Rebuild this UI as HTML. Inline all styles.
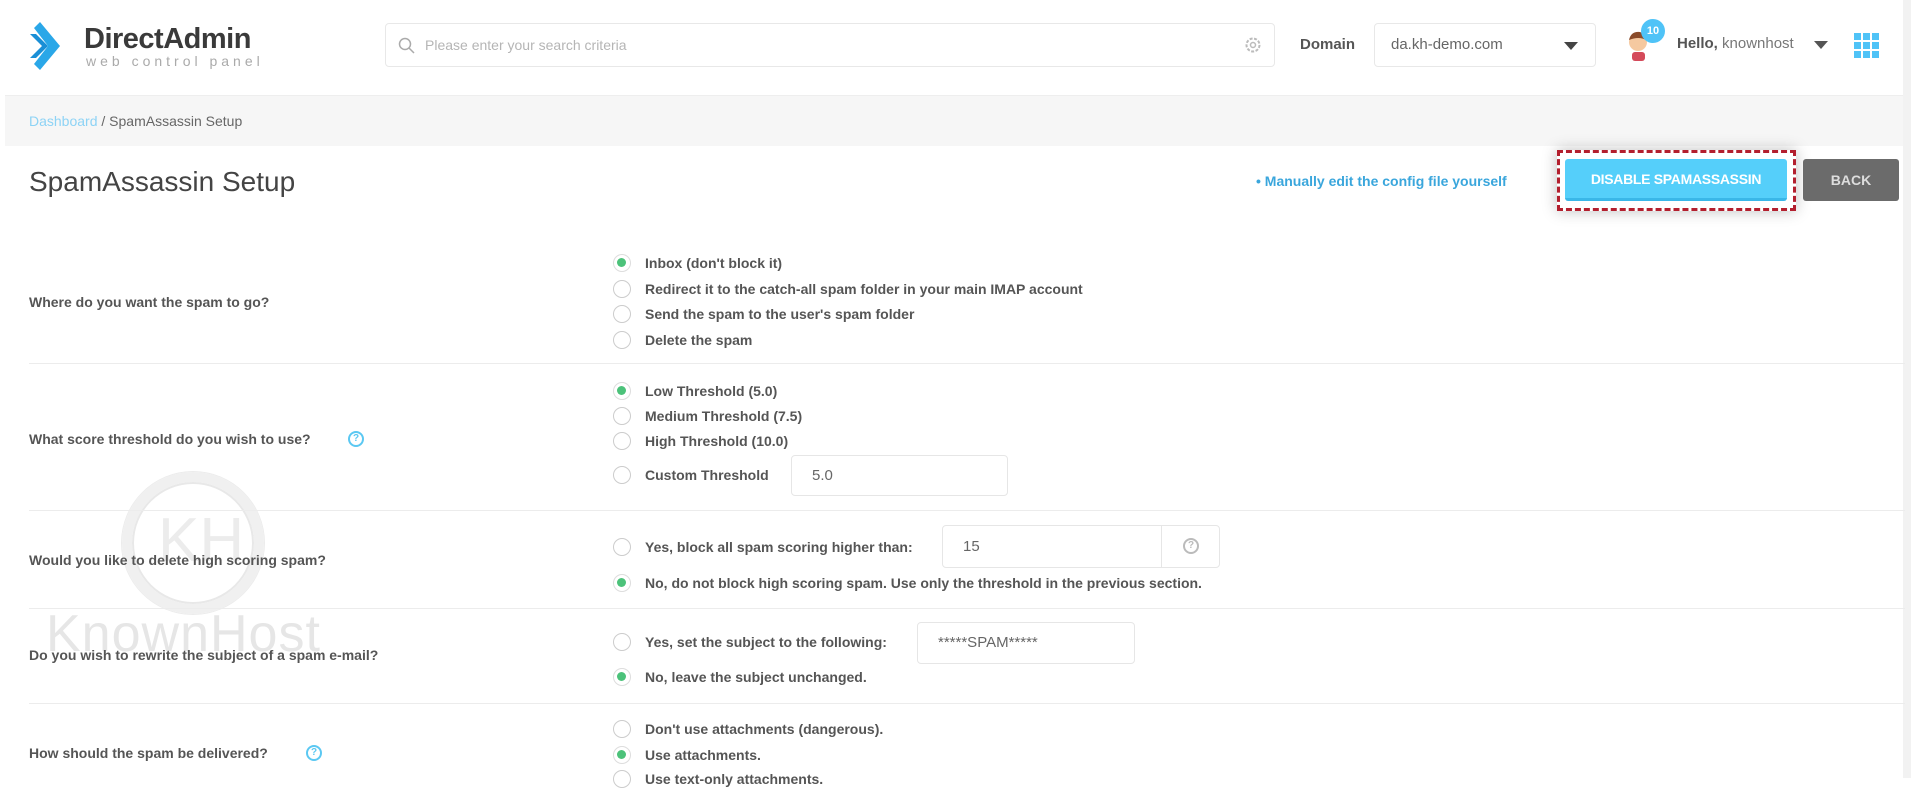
<!DOCTYPE html>
<html><head><meta charset="utf-8"><style>
*{margin:0;padding:0;box-sizing:border-box}
body{width:1911px;height:778px;overflow:hidden;background:#fff;font-family:"Liberation Sans",sans-serif;position:relative;color:#444}
.a{position:absolute;white-space:nowrap}
.t{font-size:14px;font-weight:bold;color:#555;line-height:18px}
.r{position:absolute;width:18px;height:18px;border:1.5px solid #ccc;border-radius:50%;background:#fff}
.r.on{border-color:#ddd}
.r.on::after{content:"";position:absolute;left:3px;top:3px;width:9px;height:9px;border-radius:50%;background:#4cc27a}
.in{position:absolute;border:1px solid #e6e6e6;border-radius:4px;background:#fff;font-size:15px;color:#666;padding-left:20px}
.sep{position:absolute;left:29px;width:1876px;height:1px;background:#ececec}
.q{position:absolute;width:16px;height:16px;border:2px solid #5bc8f2;border-radius:50%;font-size:10px;color:#5bc8f2;text-align:center;line-height:12px;font-weight:bold}
</style></head><body>
<div class="a" style="left:1903px;top:0;width:8px;height:778px;background:#f2f2f2"></div>
<!-- watermark -->
<div class="a" style="left:122px;top:472px;width:142px;height:142px;border-radius:50%;border:10px solid #f0f0f0;box-shadow:inset 0 0 0 2px #e8e8e8,0 0 0 1px #ececec"></div>
<div class="a" style="left:158px;top:505px;font-size:62px;color:#ececec">KH</div>
<div class="a" style="left:46px;top:604px;font-size:52px;color:#e6e6e6;letter-spacing:1px">KnownHost</div>
<!-- header -->
<svg class="a" style="left:28px;top:20px" width="34" height="52" viewBox="0 0 34 52"><path d="M2 14 L14 26 L2 38 L8 38 L20 26 L8 14Z" fill="#1a8fd6"/><path d="M12 2 L32 26 L12 50 L6 44 L20 26 L6 8Z" fill="#2aa7e8"/></svg>
<div class="a" style="left:84px;top:23px;font-size:29px;font-weight:bold;color:#3a3a3a;letter-spacing:-0.5px">DirectAdmin</div>
<div class="a" style="left:86px;top:53px;font-size:14px;color:#aaa;letter-spacing:4px">web control panel</div>
<div class="a" style="left:385px;top:23px;width:890px;height:44px;border:1px solid #e8e8e8;border-radius:4px"></div>
<svg class="a" style="left:398px;top:37px" width="18" height="18"><circle cx="7" cy="7" r="5.5" fill="none" stroke="#aaa" stroke-width="1.5"/><path d="M11 11 L16 16" stroke="#aaa" stroke-width="1.5"/></svg>
<div class="a" style="left:425px;top:37px;font-size:14px;color:#b5b5b5">Please enter your search criteria</div>
<svg class="a" style="left:1244px;top:36px" width="18" height="18"><circle cx="9" cy="9" r="6.5" fill="none" stroke="#bbb" stroke-width="2" stroke-dasharray="3 1.5"/><circle cx="9" cy="9" r="2.5" fill="none" stroke="#bbb" stroke-width="1.5"/></svg>
<div class="a" style="left:1300px;top:36px;font-size:15px;font-weight:bold;color:#555">Domain</div>
<div class="a" style="left:1374px;top:23px;width:222px;height:44px;border:1px solid #e8e8e8;border-radius:4px"></div>
<div class="a" style="left:1391px;top:36px;font-size:15px;color:#666">da.kh-demo.com</div>
<div class="a" style="left:1564px;top:42px;border-left:7px solid transparent;border-right:7px solid transparent;border-top:8px solid #444"></div>
<svg class="a" style="left:1624px;top:28px" width="30" height="34"><circle cx="14" cy="14" r="9" fill="#f5c9a0"/><path d="M5 12 Q7 3 16 4 Q22 6 22 12 Q15 8 5 12Z" fill="#8a4b2a"/><rect x="8" y="24" width="13" height="9" rx="3" fill="#d44a5a"/></svg>
<div class="a" style="left:1641px;top:19px;width:24px;height:24px;border-radius:50%;background:#4fc3f7;color:#fff;font-size:11px;font-weight:bold;text-align:center;line-height:24px">10</div>
<div class="a" style="left:1677px;top:35px;font-size:15px;color:#777"><b style="color:#555">Hello,</b> knownhost</div>
<div class="a" style="left:1814px;top:41px;border-left:7px solid transparent;border-right:7px solid transparent;border-top:8px solid #555"></div>
<svg class="a" style="left:1854px;top:33px" width="26" height="26"><g fill="#4fc3f7"><rect x="0" y="0" width="7" height="7"/><rect x="9" y="0" width="7" height="7"/><rect x="18" y="0" width="7" height="7"/><rect x="0" y="9" width="7" height="7"/><rect x="9" y="9" width="7" height="7"/><rect x="18" y="9" width="7" height="7"/><rect x="0" y="18" width="7" height="7"/><rect x="9" y="18" width="7" height="7"/><rect x="18" y="18" width="7" height="7"/></g></svg>
<!-- breadcrumb -->
<div class="a" style="left:5px;top:95px;width:1898px;height:51px;background:#f6f6f6;border-top:1px solid #eee"></div>
<div class="a" style="left:29px;top:113px;font-size:14px;color:#666"><span style="color:#8dd3f5">Dashboard</span> / SpamAssassin Setup</div>
<!-- title -->
<div class="a" style="left:29px;top:166px;font-size:28px;color:#444">SpamAssassin Setup</div>
<div class="a" style="left:1256px;top:173px;font-size:14px;font-weight:bold;color:#3aa6dc">• Manually edit the config file yourself</div>
<div class="a" style="left:1557px;top:150px;width:239px;height:61px;border:3px dashed #b31f2e;box-shadow:0 0 14px rgba(0,0,0,.25);background:#fff"></div>
<div class="a" style="left:1565px;top:159px;width:222px;height:42px;background:#55cffa;border-bottom:3px solid #3ab7e8;border-radius:3px;color:#fff;font-size:14px;font-weight:bold;text-align:center;line-height:40px;letter-spacing:-0.3px">DISABLE SPAMASSASSIN</div>
<div class="a" style="left:1803px;top:159px;width:96px;height:42px;background:#6b6b6b;border-radius:3px;color:#ddd;font-size:14px;font-weight:bold;text-align:center;line-height:42px">BACK</div>
<!-- row1 -->
<div class="a t" style="left:29px;top:293px">Where do you want the spam to go?</div>
<div class="r on" style="left:613px;top:254px"></div><div class="a t" style="left:645px;top:254px">Inbox (don't block it)</div>
<div class="r" style="left:613px;top:280px"></div><div class="a t" style="left:645px;top:280px">Redirect it to the catch-all spam folder in your main IMAP account</div>
<div class="r" style="left:613px;top:305px"></div><div class="a t" style="left:645px;top:305px">Send the spam to the user's spam folder</div>
<div class="r" style="left:613px;top:331px"></div><div class="a t" style="left:645px;top:331px">Delete the spam</div>
<div class="sep" style="top:363px"></div>
<!-- row2 -->
<div class="a t" style="left:29px;top:430px">What score threshold do you wish to use?</div>
<div class="q" style="left:348px;top:431px">?</div>
<div class="r on" style="left:613px;top:382px"></div><div class="a t" style="left:645px;top:382px">Low Threshold (5.0)</div>
<div class="r" style="left:613px;top:407px"></div><div class="a t" style="left:645px;top:407px">Medium Threshold (7.5)</div>
<div class="r" style="left:613px;top:432px"></div><div class="a t" style="left:645px;top:432px">High Threshold (10.0)</div>
<div class="r" style="left:613px;top:466px"></div><div class="a t" style="left:645px;top:466px">Custom Threshold</div>
<div class="in" style="left:791px;top:455px;width:217px;height:41px;line-height:40px">5.0</div>
<div class="sep" style="top:510px"></div>
<!-- row3 -->
<div class="a t" style="left:29px;top:551px">Would you like to delete high scoring spam?</div>
<div class="r" style="left:613px;top:538px"></div><div class="a t" style="left:645px;top:538px">Yes, block all spam scoring higher than:</div>
<div class="in" style="left:942px;top:525px;width:278px;height:43px;line-height:42px">15</div>
<div class="a" style="left:1161px;top:525px;width:1px;height:43px;background:#e6e6e6"></div>
<div class="a" style="left:1183px;top:538px;width:16px;height:16px;border:2px solid #bbb;border-radius:50%;font-size:10px;color:#bbb;text-align:center;line-height:12px;font-weight:bold">?</div>
<div class="r on" style="left:613px;top:574px"></div><div class="a t" style="left:645px;top:574px">No, do not block high scoring spam. Use only the threshold in the previous section.</div>
<div class="sep" style="top:608px"></div>
<!-- row4 -->
<div class="a t" style="left:29px;top:646px">Do you wish to rewrite the subject of a spam e-mail?</div>
<div class="r" style="left:613px;top:633px"></div><div class="a t" style="left:645px;top:633px">Yes, set the subject to the following:</div>
<div class="in" style="left:917px;top:622px;width:218px;height:42px;line-height:40px">*****SPAM*****</div>
<div class="r on" style="left:613px;top:668px"></div><div class="a t" style="left:645px;top:668px">No, leave the subject unchanged.</div>
<div class="sep" style="top:703px"></div>
<!-- row5 -->
<div class="a t" style="left:29px;top:744px">How should the spam be delivered?</div>
<div class="q" style="left:306px;top:745px">?</div>
<div class="r" style="left:613px;top:720px"></div><div class="a t" style="left:645px;top:720px">Don't use attachments (dangerous).</div>
<div class="r on" style="left:613px;top:746px"></div><div class="a t" style="left:645px;top:746px">Use attachments.</div>
<div class="r" style="left:613px;top:770px"></div><div class="a t" style="left:645px;top:770px">Use text-only attachments.</div>
</body></html>
